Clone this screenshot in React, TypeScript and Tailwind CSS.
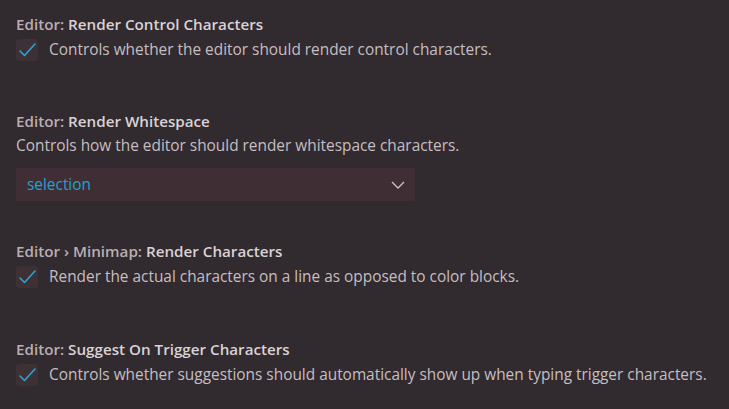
import React from 'react';

const font = { fontFamily: '"Open Sans", "Noto Sans", sans-serif' };

function Check() {
  return (
    <div className="flex h-[22px] w-[22px] shrink-0 items-center justify-center rounded-[3px] bg-[#3d3135]">
      <svg width="22" height="22" viewBox="0 0 22 22" fill="none">
        <polyline points="4,12 8.5,16.5 19,5" stroke="#29a5d5" strokeWidth="1.6" strokeLinecap="round" strokeLinejoin="round" />
      </svg>
    </div>
  );
}

function Title({ prefix, name }: { prefix: string; name: string }) {
  return (
    <div className="h-5 text-[15.2px] font-semibold leading-5">
      <span className="text-[#b9afb3]">{prefix}</span>
      <span className="text-[#dad2d6]">{name}</span>
    </div>
  );
}

function CheckSetting({ prefix, name, desc, className }: { prefix: string; name: string; desc: string; className?: string }) {
  return (
    <div className={className}>
      <Title prefix={prefix} name={name} />
      <div className="mt-[5px] flex items-center gap-[11px]">
        <Check />
        <span className="text-[15.4px] leading-5 text-[#c6bec2]">{desc}</span>
      </div>
    </div>
  );
}

export default function App() {
  return (
    <div style={font} className="h-[409px] w-[729px] overflow-hidden bg-[#312a2e] px-4 pt-[14px]">
      <CheckSetting
        prefix="Editor: "
        name="Render Control Characters"
        desc="Controls whether the editor should render control characters."
      />

      <div className="mt-[50px]">
        <Title prefix="Editor: " name="Render Whitespace" />
        <div className="mt-[5px] text-[15.4px] leading-5 text-[#c6bec2]">
          Controls how the editor should render whitespace characters.
        </div>
        <div className="mt-3 flex h-[33px] w-[399px] items-center justify-between bg-[#3f2f35] pl-[11px] pr-[10px]">
          <span className="text-[15.4px] text-[#22a1d2]">selection</span>
          <svg width="14" height="8" viewBox="0 0 14 8" fill="none">
            <polyline points="1,1 7,7 13,1" stroke="#cdc5c9" strokeWidth="1.3" />
          </svg>
        </div>
      </div>

      <CheckSetting
        className="mt-[40px]"
        prefix="Editor › Minimap: "
        name="Render Characters"
        desc="Render the actual characters on a line as opposed to color blocks."
      />

      <CheckSetting
        className="mt-[51px]"
        prefix="Editor: "
        name="Suggest On Trigger Characters"
        desc="Controls whether suggestions should automatically show up when typing trigger characters."
      />
    </div>
  );
}
